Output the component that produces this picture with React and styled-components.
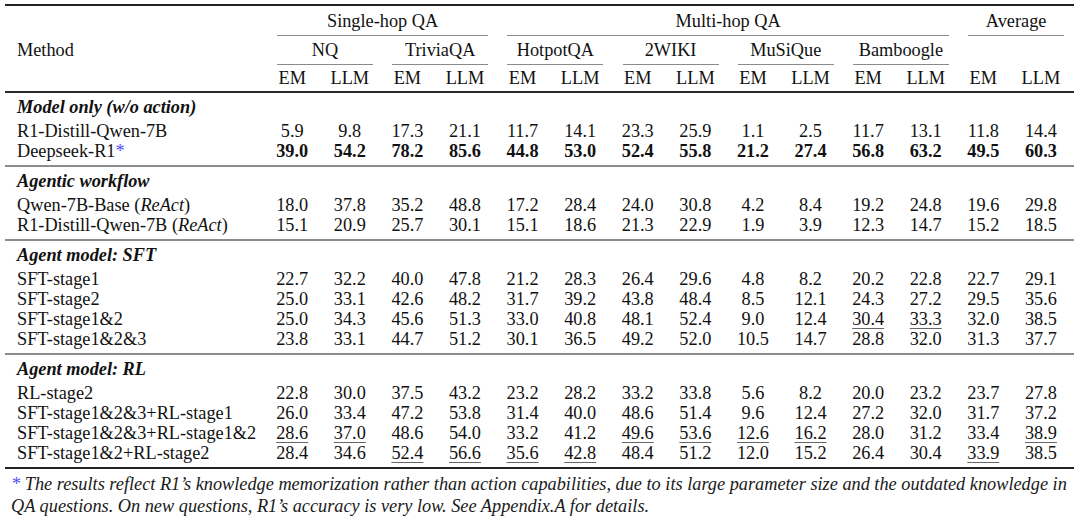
import React from 'react'
import styled, { createGlobalStyle } from 'styled-components'

const COLS = '262.4px repeat(14, 57.6px)'

const GlobalStyle = createGlobalStyle`
  body {
    margin: 0;
    background: #fff;
    color: #111;
    font-family: "Liberation Serif", "Times New Roman", serif;
    font-size: 18.3px;
  }
`

const Page = styled.div`
  width: 1080px;
  padding: 4px 0 0 5px;
  box-sizing: border-box;
`

const Table = styled.div`
  width: 1068.8px;
  border-top: 2px solid #222;
`

const Head = styled.div`
  display: grid;
  grid-template-columns: ${COLS};
  grid-template-rows: 30px 29px 26px;
  border-bottom: 2px solid #2a2a2a;
  line-height: 20px;
`

const MethodHead = styled.div`
  grid-column: 1;
  grid-row: 1 / span 3;
  align-self: center;
  padding: 3px 0 0 12px;
`

const Group = styled.div`
  grid-column: ${({ $col, $span }) => `${$col} / span ${$span}`};
  grid-row: ${({ $row }) => $row};
  margin: 0 9.6px;
  display: flex;
  align-items: center;
  justify-content: center;
  border-bottom: 1px solid #8a8a8a;
`

const Metric = styled.div`
  grid-row: 3;
  display: flex;
  align-items: center;
  justify-content: center;
  padding-right: 8px;
`

const Section = styled.div`
  padding: 4px 0;
  border-bottom: ${({ $last }) => ($last ? '2px solid #222' : '2px solid #8c8c8c')};
`

const SectionTitle = styled.div`
  height: 20px;
  line-height: 20px;
  margin-bottom: 4px;
  padding-left: 12px;
  font-weight: bold;
  font-style: italic;
`

const Row = styled.div`
  display: grid;
  grid-template-columns: ${COLS};
  height: 20px;
  line-height: 20px;
  font-weight: ${({ $bold }) => ($bold ? 'bold' : 'normal')};
`

const Name = styled.div`
  padding-left: 12px;
  font-weight: normal;
  white-space: nowrap;
`

const Star = styled.span`
  color: #4d4dff;
`

const Cell = styled.div`
  text-align: center;
  padding-right: 8px;
`

const Num = styled.span`
  text-decoration: ${({ $u }) => ($u ? 'underline' : 'none')};
  text-decoration-color: #666;
  text-decoration-thickness: 1px;
  text-underline-offset: 3px;
`

const Note = styled.div`
  padding: 5px 0 0 6px;
  font-style: italic;
  font-size: 18.3px;
  line-height: 21.5px;
  color: #1a1a1a;
`

const NoteLine = styled.div`
  white-space: nowrap;
`

const groups = [
  { label: 'Single-hop QA', col: 2, span: 4 },
  { label: 'Multi-hop QA', col: 6, span: 8 },
  { label: 'Average', col: 14, span: 2 },
]

const datasets = ['NQ', 'TriviaQA', 'HotpotQA', '2WIKI', 'MuSiQue', 'Bamboogle']

// "_" marks an underlined (second best) value
const sections = [
  {
    title: 'Model only (w/o action)',
    rows: [
      { name: 'R1-Distill-Qwen-7B', v: '5.9 9.8 17.3 21.1 11.7 14.1 23.3 25.9 1.1 2.5 11.7 13.1 11.8 14.4' },
      { name: 'Deepseek-R1', star: true, bold: true, v: '39.0 54.2 78.2 85.6 44.8 53.0 52.4 55.8 21.2 27.4 56.8 63.2 49.5 60.3' },
    ],
  },
  {
    title: 'Agentic workflow',
    rows: [
      { name: 'Qwen-7B-Base', react: true, v: '18.0 37.8 35.2 48.8 17.2 28.4 24.0 30.8 4.2 8.4 19.2 24.8 19.6 29.8' },
      { name: 'R1-Distill-Qwen-7B', react: true, v: '15.1 20.9 25.7 30.1 15.1 18.6 21.3 22.9 1.9 3.9 12.3 14.7 15.2 18.5' },
    ],
  },
  {
    title: 'Agent model: SFT',
    rows: [
      { name: 'SFT-stage1', v: '22.7 32.2 40.0 47.8 21.2 28.3 26.4 29.6 4.8 8.2 20.2 22.8 22.7 29.1' },
      { name: 'SFT-stage2', v: '25.0 33.1 42.6 48.2 31.7 39.2 43.8 48.4 8.5 12.1 24.3 27.2 29.5 35.6' },
      { name: 'SFT-stage1&2', v: '25.0 34.3 45.6 51.3 33.0 40.8 48.1 52.4 9.0 12.4 _30.4 _33.3 32.0 38.5' },
      { name: 'SFT-stage1&2&3', v: '23.8 33.1 44.7 51.2 30.1 36.5 49.2 52.0 10.5 14.7 28.8 32.0 31.3 37.7' },
    ],
  },
  {
    title: 'Agent model: RL',
    rows: [
      { name: 'RL-stage2', v: '22.8 30.0 37.5 43.2 23.2 28.2 33.2 33.8 5.6 8.2 20.0 23.2 23.7 27.8' },
      { name: 'SFT-stage1&2&3+RL-stage1', v: '26.0 33.4 47.2 53.8 31.4 40.0 48.6 51.4 9.6 12.4 27.2 32.0 31.7 37.2' },
      { name: 'SFT-stage1&2&3+RL-stage1&2', v: '_28.6 _37.0 48.6 54.0 33.2 41.2 _49.6 _53.6 _12.6 _16.2 28.0 31.2 33.4 _38.9' },
      { name: 'SFT-stage1&2+RL-stage2', v: '28.4 34.6 _52.4 _56.6 _35.6 _42.8 48.4 51.2 12.0 15.2 26.4 30.4 _33.9 38.5' },
    ],
  },
]

function DataRow({ row }) {
  return (
    <Row $bold={row.bold}>
      <Name>
        {row.name}
        {row.star && <Star>*</Star>}
        {row.react && <> (<i>ReAct</i>)</>}
      </Name>
      {row.v.split(' ').map((val, i) => (
        <Cell key={i}>
          <Num $u={val.startsWith('_')}>{val.replace('_', '')}</Num>
        </Cell>
      ))}
    </Row>
  )
}

export default function App() {
  return (
    <Page>
      <GlobalStyle />
      <Table>
        <Head>
          <MethodHead>Method</MethodHead>
          {groups.map(g => (
            <Group key={g.label} $col={g.col} $span={g.span} $row={1}>{g.label}</Group>
          ))}
          {datasets.map((d, i) => (
            <Group key={d} $col={2 + i * 2} $span={2} $row={2}>{d}</Group>
          ))}
          {Array.from({ length: 7 }).flatMap((_, i) => [
            <Metric key={'em' + i}>EM</Metric>,
            <Metric key={'llm' + i}>LLM</Metric>,
          ])}
        </Head>
        {sections.map((s, si) => (
          <Section key={s.title} $last={si === sections.length - 1}>
            <SectionTitle>{s.title}</SectionTitle>
            {s.rows.map(r => <DataRow key={r.name + si} row={r} />)}
          </Section>
        ))}
      </Table>
      <Note>
        <NoteLine>
          <Star>*</Star> The results reflect R1’s knowledge memorization rather than action capabilities, due to its large parameter size and the outdated knowledge in
        </NoteLine>
        <NoteLine>QA questions. On new questions, R1’s accuracy is very low. See Appendix.A for details.</NoteLine>
      </Note>
    </Page>
  )
}
